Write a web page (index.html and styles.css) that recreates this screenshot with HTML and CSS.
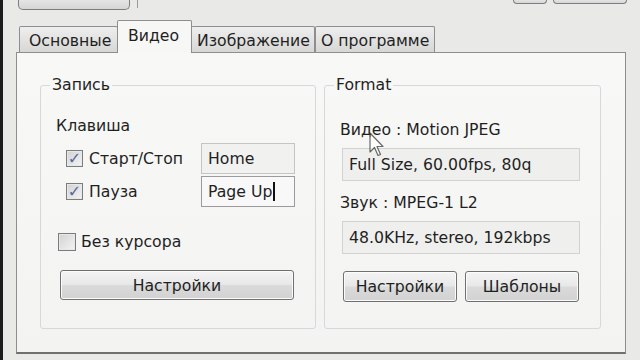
FILE: index.html
```html
<!DOCTYPE html>
<html lang="ru">
<head>
    <meta charset="UTF-8">
    <title>Настройки записи</title>
    <link rel="stylesheet" href="styles.css">
</head>
<body>
    <div class="window">
        <!-- нижние края кнопок над вкладками -->
        <div class="top-strip">
            <div class="stub stub-wide"></div>
            <div class="stub-line"></div>
            <div class="stub-right">
                <div class="stub stub-small"></div>
                <div class="stub stub-long"></div>
            </div>
        </div>

        <div class="tabs">
            <div class="tab tab-first">Основные</div>
            <div class="tab active">Видео</div>
            <div class="tab tab-img">Изображение</div>
            <div class="tab tab-about">О программе</div>
        </div>

        <div class="panel">
            <fieldset class="group group-record">
                <legend>Запись</legend>
                <div class="caption">Клавиша</div>
                <div class="hotkeys">
                    <label class="check checked">Старт/Стоп</label>
                    <div class="keybox">Home</div>
                    <label class="check checked">Пауза</label>
                    <div class="keybox focus">Page Up<span class="caret"></span></div>
                </div>
                <label class="check plain nocursor">Без курсора</label>
                <button class="btn btn-wide">Настройки</button>
            </fieldset>

            <fieldset class="group group-format">
                <legend>Format</legend>
                <div class="info-label first">Видео : Motion JPEG</div>
                <div class="info-field">Full Size, 60.00fps, 80q</div>
                <div class="info-label">Звук : MPEG-1 L2</div>
                <div class="info-field">48.0KHz, stereo, 192kbps</div>
                <div class="btn-row">
                    <button class="btn">Настройки</button>
                    <button class="btn">Шаблоны</button>
                </div>
            </fieldset>
        </div>

        <svg class="pointer" width="16" height="26" viewBox="0 0 16 26">
            <path d="M1 1 L1 20 L5.5 15.5 L9 23.5 L11.5 22.5 L8 14.5 L14 14.5 Z" fill="#ffffff" stroke="#3a3a3a" stroke-width="1.2" stroke-linejoin="round"/>
        </svg>
    </div>
</body>
</html>
```

FILE: styles.css
```css
body {
    margin: 0;
    background-color: #e9e9e8;
    font-family: 'DejaVu Sans', sans-serif;
    font-size: 15.7px;
    color: #1f1f1f;
    overflow: hidden;
}
.window {
    position: relative;
    height: 360px;
    border-left: 3px solid #1c1c1c;
    padding-left: 13px;
    padding-right: 14px;
    box-sizing: border-box;
}
.top-strip {
    height: 20px;
    display: flex;
    align-items: flex-start;
}
.stub {
    border: 1px solid #7d7d7d;
    border-top: none;
    border-radius: 0 0 5px 5px;
    background: linear-gradient(#e4e4e4, #d6d6d6);
}
.stub-wide {
    margin-left: 2px;
    width: 110px;
    height: 9px;
}
.stub-line {
    width: 1px;
    height: 8px;
    margin-left: 7px;
    background-color: #9a9a9a;
}
.stub-right {
    margin-left: auto;
    margin-right: -1px;
    display: flex;
    gap: 6px;
}
.stub-small {
    width: 32px;
    height: 3px;
}
.stub-long {
    width: 72px;
    height: 3px;
}
.tabs {
    display: flex;
    align-items: flex-end;
    height: 32px;
    padding-left: 3px;
}
.tab {
    height: 26px;
    box-sizing: border-box;
    border: 1px solid #8e8e8e;
    border-bottom: none;
    border-radius: 2px 2px 0 0;
    background: linear-gradient(#eeeeee, #d7d7d6);
    line-height: 27px;
    padding: 0 0 0 9px;
    white-space: nowrap;
}
.tab-first {
    width: 99px;
}
.tab.active {
    width: 75px;
    height: 33px;
    margin: 0 -1px -1px -1px;
    background: #f7f7f6;
    line-height: 30px;
    position: relative;
    z-index: 2;
    padding-left: 10px;
}
.tab-img {
    width: 124px;
    padding-left: 5px;
}
.tab-about {
    width: 120px;
    padding-left: 5px;
}
.panel {
    height: 302px;
    box-sizing: border-box;
    border: 1px solid #8e8e8e;
    border-bottom: 2px solid #6f6f6f;
    background: linear-gradient(#f8f8f7, #f3f3f1);
    padding: 23px 0 0 23px;
    display: grid;
    grid-template-columns: 276px 277px;
    column-gap: 8px;
    align-items: start;
}
.group {
    margin: 0;
    min-width: 0;
    height: 253px;
    box-sizing: border-box;
    border: 1px solid #d3d9dc;
    border-radius: 3px;
    padding: 0 0 0 15px;
}
.group legend {
    padding: 0 2px;
    margin-left: -6px;
    line-height: 18px;
}
.caption {
    margin-top: 23px;
    line-height: 18px;
}
.hotkeys {
    display: grid;
    grid-template-columns: 135px 94px;
    row-gap: 2px;
    margin-top: 8px;
    padding-left: 10px;
}
.check {
    display: flex;
    align-items: center;
    gap: 6px;
    line-height: 18px;
}
.check::before {
    content: "";
    width: 15px;
    height: 15px;
    flex: none;
    border: 1px solid #7c7c7c;
    background: linear-gradient(135deg, #d2d2d2, #f4f4f4);
    box-shadow: inset 0 0 0 1px #e8e8e8;
}
.check.checked::before {
    content: "✓";
    font-size: 16px;
    font-weight: bold;
    line-height: 16px;
    text-align: center;
    color: #5a68a0;
}
.keybox {
    height: 31px;
    box-sizing: border-box;
    border: 1px solid #c5c5c5;
    background: #f1f1f0;
    line-height: 29px;
    padding-left: 6px;
}
.keybox.focus {
    border-color: #9b9b9b;
    background: #f8f8f8;
}
.caret {
    display: inline-block;
    width: 2px;
    height: 19px;
    margin-left: 1px;
    vertical-align: -4px;
    background: #111;
}
.nocursor {
    margin-top: 26px;
    margin-left: 2px;
    gap: 5px;
}
.nocursor::before {
    width: 16px;
    height: 16px;
}
.btn {
    font-family: inherit;
    font-size: 15.7px;
    color: #1f1f1f;
    height: 30px;
    box-sizing: border-box;
    border: 1px solid #707070;
    border-radius: 3px;
    background: linear-gradient(#f4f4f4 0%, #e8e8e8 48%, #dadada 52%, #d2d2d2 100%);
    box-shadow: inset 0 0 0 1px #fbfbfb;
    padding: 0;
}
.btn-wide {
    display: block;
    width: 234px;
    margin-top: 19px;
    margin-left: 4px;
}
.info-label {
    line-height: 18px;
    margin-top: 14px;
}
.info-label.first {
    margin-top: 27px;
}
.info-field {
    width: 238px;
    height: 33px;
    box-sizing: border-box;
    margin-top: 9px;
    margin-left: 2px;
    border: 1px solid #d2d2d2;
    background: #efefee;
    line-height: 31px;
    padding-left: 6px;
}
.info-field + .info-label {
    margin-top: 13px;
}
.btn-row {
    display: flex;
    gap: 8px;
    margin-top: 17px;
    margin-left: 3px;
}
.btn-row .btn {
    width: 114px;
    height: 31px;
}
.pointer {
    position: absolute;
    left: 366px;
    top: 132px;
    opacity: 0.75;
}
```
